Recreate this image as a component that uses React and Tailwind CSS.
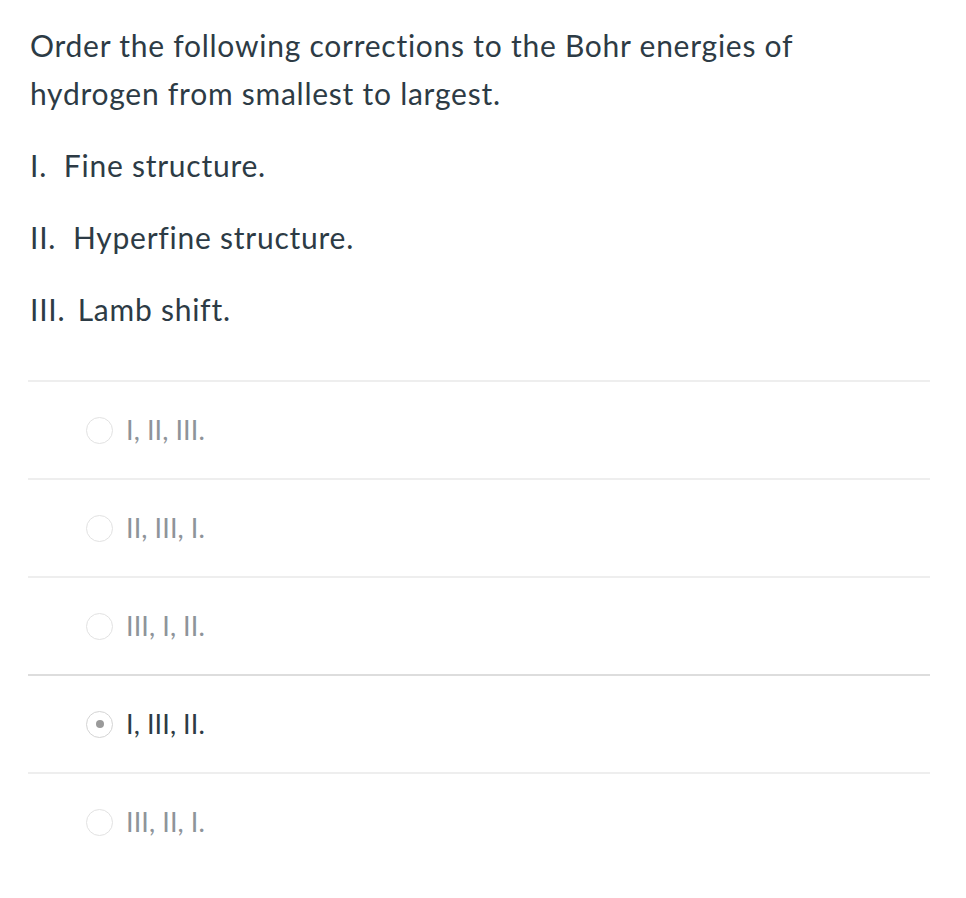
const answers = [
  { id: "a", label: "I, II, III." },
  { id: "b", label: "II, III, I." },
  { id: "c", label: "III, I, II." },
  { id: "d", label: "I, III, II.", selected: true },
  { id: "e", label: "III, II, I." },
];

const Radio = ({ selected }) => (
  <span
    className={[
      "grid h-[27px] w-[27px] shrink-0 place-items-center rounded-full border bg-white",
      selected ? "border-[#d4d4d4]" : "border-[#e2e2e2]",
    ].join(" ")}
  >
    {selected && <span className="block h-[8px] w-[8px] rounded-full bg-[#9a9a9a]" />}
  </span>
);

export default function App() {
  return (
    <div className="min-h-screen bg-white pl-[28px] pr-[36px] pt-[21px] font-['Lato',sans-serif] text-[#2d3b45]">
      <div className="text-[30px] leading-[48px] tracking-[0.75px]">
        <p className="pl-[2px]">
          Order the following corrections to the Bohr energies of hydrogen from smallest to largest.
        </p>
        <p className="mt-[24px] pl-[2px]">I.&nbsp; Fine structure.</p>
        <p className="mt-[24px] pl-[2px]">II.&nbsp; Hyperfine structure.</p>
        <p className="mt-[24px] pl-[2px]">
          III. <span className="ml-[4px]">Lamb shift.</span>
        </p>
      </div>

      <div className="mt-[47px]">
        {answers.map((a) => (
          <div
            key={a.id}
            className={[
              "flex h-[98px] items-center gap-[13px] border-t-2 pl-[58px]",
              a.selected ? "border-[#dddddd]" : "border-[#eeeeee]",
            ].join(" ")}
          >
            <Radio selected={a.selected} />
            <span
              className={[
                "text-[27px] tracking-[0.1px]",
                a.selected ? "text-[#2d3b45]" : "text-[#8e949a]",
              ].join(" ")}
            >
              {a.label}
            </span>
          </div>
        ))}
      </div>
    </div>
  );
}
